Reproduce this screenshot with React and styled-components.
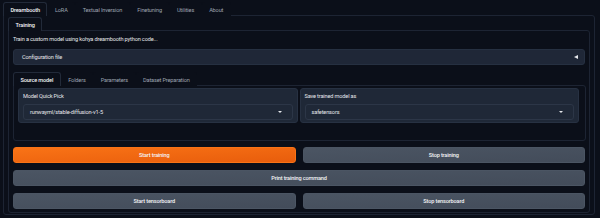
import React, { useState } from "react";
import styled, { createGlobalStyle } from "styled-components";

const GlobalStyle = createGlobalStyle`
  html, body {
    margin: 0;
    padding: 0;
    background: #0b0f19;
  }
  body {
    font-family: Roboto, "Open Sans", sans-serif;
    letter-spacing: -0.15px;
    color: #e5e7eb;
    -webkit-font-smoothing: antialiased;
  }
`;

const Page = styled.div`
  width: 600px;
  height: 218px;
  box-sizing: border-box;
  padding: 2px 5px 0 3px;
`;

const TabBar = styled.div`
  display: flex;
  height: 13px;
  position: relative;
  z-index: 1;
`;

const Tab = styled.div`
  height: 14px;
  box-sizing: border-box;
  padding: 0 6.5px;
  display: flex;
  align-items: center;
  font-size: 5.6px;
  font-weight: ${(p) => (p.$active ? 500 : 400)};
  color: ${(p) => (p.$active ? "#f3f4f6" : "#9ca3af")};
  border: 1px solid ${(p) => (p.$active ? "#222a39" : "transparent")};
  border-bottom: none;
  border-radius: 3px 3px 0 0;
  background: #0b0f19;
  margin-bottom: -1px;
`;

const Panel = styled.div`
  border: 1px solid #1d2433;
  border-radius: 0 3px 3px 3px;
  padding: ${(p) => p.$pad || "1px 4px 2px 4px"};
  height: ${(p) => (p.$h ? `${p.$h}px` : "auto")};
  box-sizing: border-box;
`;

const Description = styled.div`
  font-size: 5.6px;
  color: #e5e7eb;
  height: 10px;
  display: flex;
  align-items: center;
  margin: 3px 0 5px 0;
`;

const Accordion = styled.div`
  height: 16px;
  background: #1f2737;
  border: 1px solid #263041;
  border-radius: 3px;
  box-sizing: border-box;
  display: flex;
  align-items: center;
  justify-content: space-between;
  padding: 0 6px 0 8px;
  font-size: 5.6px;
  color: #e5e7eb;
  margin-right: 1px;
`;

const Triangle = styled.span`
  width: 0;
  height: 0;
  border-top: 2.5px solid transparent;
  border-bottom: 2.5px solid transparent;
  border-right: 4px solid #e5e7eb;
`;

const SubTabs = styled.div`
  margin-top: 7px;
`;

const PickRow = styled.div`
  display: grid;
  grid-template-columns: 1fr 1fr;
  gap: 2px;
`;

const PickBlock = styled.div`
  background: #1f2837;
  border: 1px solid #273142;
  border-radius: 3px;
  height: 35px;
  box-sizing: border-box;
  padding: 3px 4px 0 4px;
`;

const Label = styled.div`
  font-size: 5.6px;
  color: #e5e7eb;
  height: 8px;
  display: flex;
  align-items: center;
  margin-bottom: 4px;
`;

const Select = styled.div`
  height: 16px;
  box-sizing: border-box;
  border: 1px solid #2c3647;
  border-radius: 3px;
  background: #1f2837;
  display: flex;
  align-items: center;
  justify-content: space-between;
  padding: 0 10px 0 6px;
  font-size: 5.6px;
  color: #e5e7eb;
`;

const Caret = styled.span`
  width: 0;
  height: 0;
  border-left: 2px solid transparent;
  border-right: 2px solid transparent;
  border-top: 2px solid #e5e7eb;
`;

const ButtonGrid = styled.div`
  display: grid;
  grid-template-columns: 1fr 1fr;
  gap: 7px 7px;
  margin-top: 6px;
  margin-right: 1px;
`;

const Button = styled.button`
  grid-column: ${(p) => (p.$wide ? "1 / span 2" : "auto")};
  height: 16px;
  border-radius: 3px;
  border: 1px solid ${(p) => (p.$primary ? "#f97316" : "#4b5563")};
  background: ${(p) =>
    p.$primary
      ? "linear-gradient(to bottom right, #f97316, #e85d0c)"
      : "linear-gradient(to bottom right, #4b5563, #434c5a)"};
  color: #f3f4f6;
  font-family: inherit;
  letter-spacing: inherit;
  font-size: 5.6px;
  font-weight: 500;
  padding: 0;
  cursor: pointer;
`;

export default function App() {
  const [tab, setTab] = useState("Dreambooth");
  const [subTab, setSubTab] = useState("Source model");
  const tabs = ["Dreambooth", "LoRA", "Textual Inversion", "Finetuning", "Utilities", "About"];
  const subTabs = ["Source model", "Folders", "Parameters", "Dataset Preparation"];

  return (
    <>
      <GlobalStyle />
      <Page>
        <TabBar>
          {tabs.map((t) => (
            <Tab key={t} $active={t === tab} onClick={() => setTab(t)}>
              {t}
            </Tab>
          ))}
        </TabBar>
        <Panel $h={200}>
          <TabBar>
            <Tab $active>Training</Tab>
          </TabBar>
          <Panel $h={183} $pad="0 3px 0 4px">
            <Description>Train a custom model using kohya dreambooth python code...</Description>
            <Accordion>
              Configuration file
              <Triangle />
            </Accordion>
            <SubTabs>
              <TabBar>
                {subTabs.map((t) => (
                  <Tab key={t} $active={t === subTab} onClick={() => setSubTab(t)}>
                    {t}
                  </Tab>
                ))}
              </TabBar>
              <Panel $h={56} $pad="2px 6px 0 4px">
                <PickRow>
                  <PickBlock>
                    <Label>Model Quick Pick</Label>
                    <Select>
                      runwayml/stable-diffusion-v1-5
                      <Caret />
                    </Select>
                  </PickBlock>
                  <PickBlock>
                    <Label>Save trained model as</Label>
                    <Select>
                      safetensors
                      <Caret />
                    </Select>
                  </PickBlock>
                </PickRow>
              </Panel>
            </SubTabs>
            <ButtonGrid>
              <Button $primary>Start training</Button>
              <Button>Stop training</Button>
              <Button $wide>Print training command</Button>
              <Button>Start tensorboard</Button>
              <Button>Stop tensorboard</Button>
            </ButtonGrid>
          </Panel>
        </Panel>
      </Page>
    </>
  );
}
